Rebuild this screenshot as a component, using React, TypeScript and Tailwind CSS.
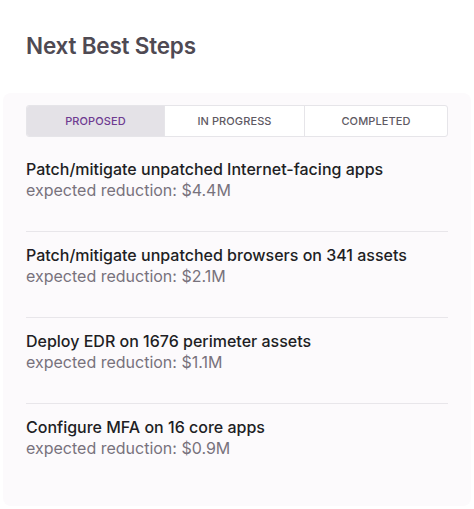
import { useState } from 'react'

const TABS = ['Proposed', 'In Progress', 'Completed']

const STEPS = [
  { title: 'Patch/mitigate unpatched Internet-facing apps', reduction: '$4.4M' },
  { title: 'Patch/mitigate unpatched browsers on 341 assets', reduction: '$2.1M' },
  { title: 'Deploy EDR on 1676 perimeter assets', reduction: '$1.1M' },
  { title: 'Configure MFA on 16 core apps', reduction: '$0.9M' },
]

export default function App() {
  const [active, setActive] = useState(0)

  return (
    <div className="h-[509px] overflow-hidden bg-white font-['Inter',sans-serif]">
      <h1 className="px-[26px] pt-[31px] text-[22.5px] font-semibold leading-[30px] tracking-[-0.2px] text-[#4f4a53]">
        Next Best Steps
      </h1>

      <div className="mx-[3px] mt-[32px] rounded-lg bg-[#fcfafc] px-[23px] pt-[12px] pb-[17px]">
        <div className="grid grid-cols-[137px_140px_1fr] overflow-hidden rounded-[3px] border border-[#e6e5e9] bg-white">
          {TABS.map((tab, i) => (
            <button
              key={tab}
              type="button"
              onClick={() => setActive(i)}
              className={`h-[30px] text-[11px] font-medium uppercase tracking-[0.1px] ${
                i > 0 ? 'border-l border-[#e6e5e9]' : ''
              } ${active === i ? 'bg-[#e4e2e7] text-[#6e3b91]' : 'text-[#5e5963]'}`}
            >
              {tab}
            </button>
          ))}
        </div>

        <div className="mt-[22px]">
          {STEPS.map((step, i) => (
            <div
              key={step.title}
              className={`pb-[30px] ${i > 0 ? 'border-t border-[#e8e6ea] pt-[13px]' : ''}`}
            >
              <p className="text-[16px] leading-[21px] font-medium text-[#211e24]">{step.title}</p>
              <p className="text-[16px] leading-[21px] text-[#78727c]">
                expected reduction: {step.reduction}
              </p>
            </div>
          ))}
        </div>
      </div>
    </div>
  )
}
